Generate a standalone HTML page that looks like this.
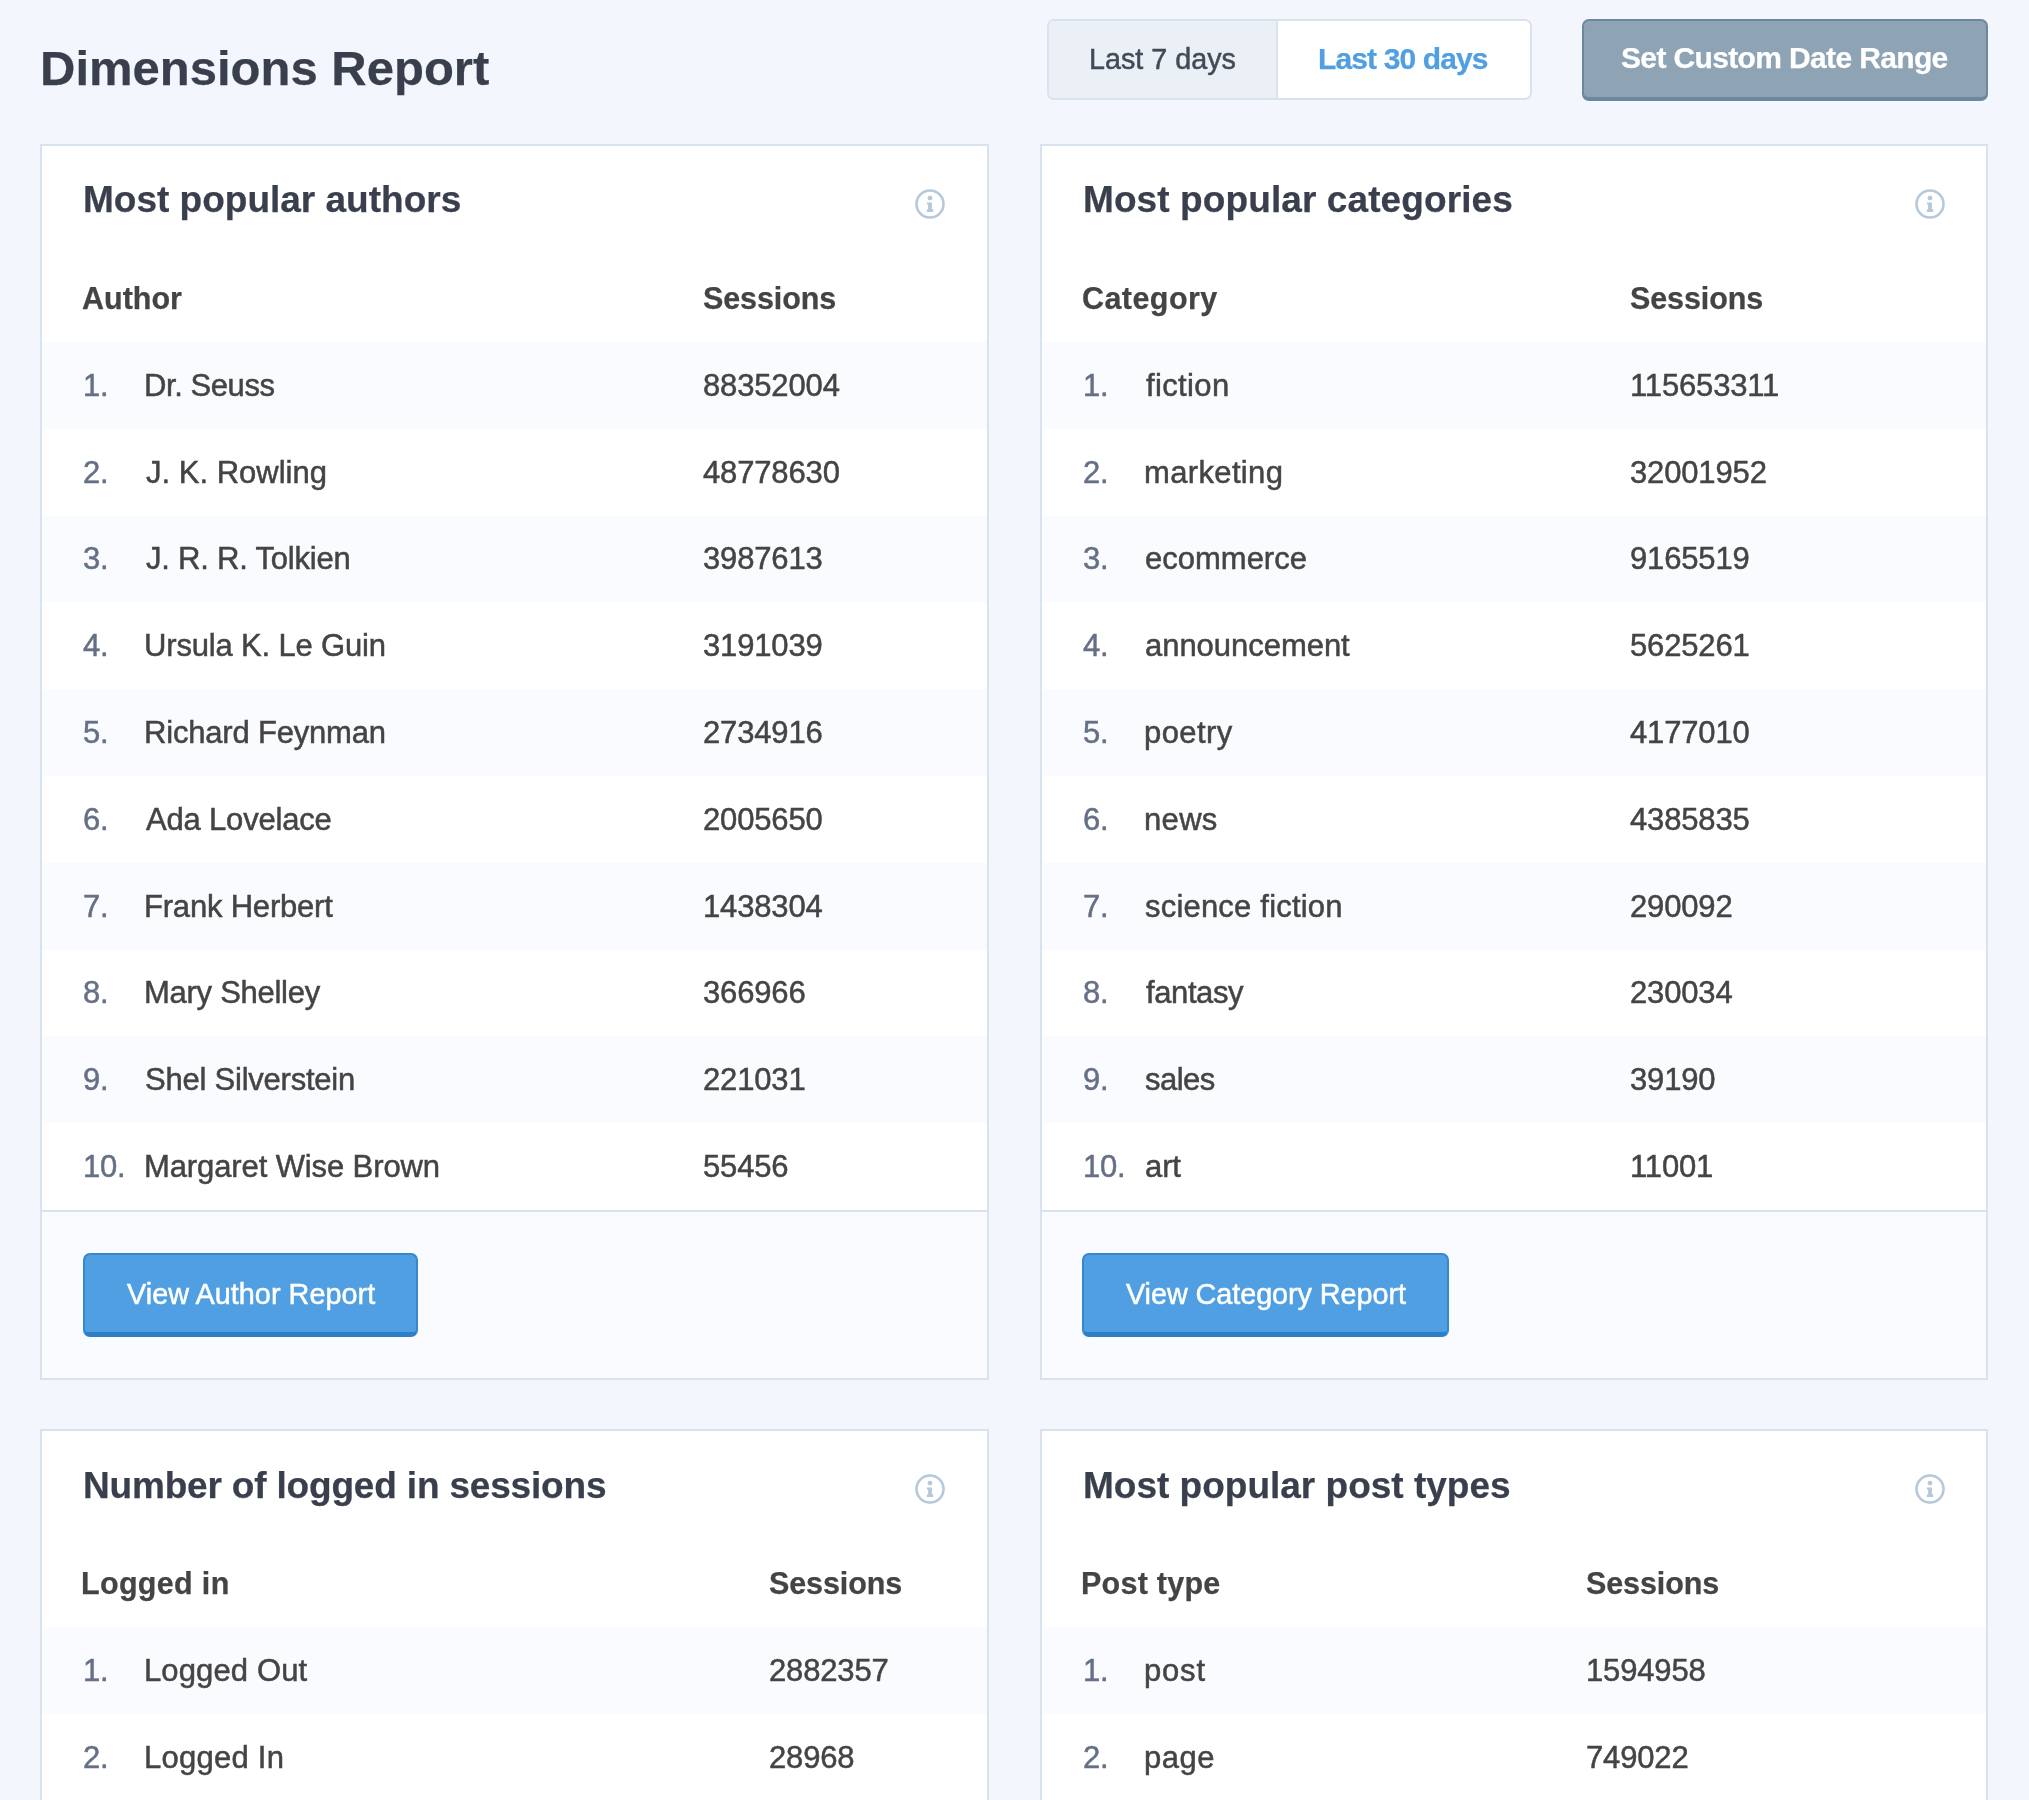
<!DOCTYPE html>
<html><head><meta charset="utf-8">
<style>
*{box-sizing:border-box;margin:0;padding:0}
html,body{width:2029px;height:1800px;overflow:hidden;background:#f3f6fd;font-family:"Liberation Sans",sans-serif;color:#444444;position:relative}
.t{position:absolute;white-space:nowrap;-webkit-text-stroke:0.5px currentColor;will-change:transform}
.t.bd{-webkit-text-stroke:0.25px currentColor}
.b{position:absolute}
</style></head><body>
<div class="t bd" style="left:40.0px;top:37.62px;font-size:49px;line-height:61px;font-weight:bold;color:#393f4c;">Dimensions Report</div>
<div class="b" style="left:1047px;top:19px;width:485px;height:81px;border:2px solid #d8e3ee;border-radius:7px;background:#fff;overflow:hidden"><div class="b" style="left:0;top:0;width:229px;height:77px;background:#ebeff6;border-right:2px solid #d8e3ee"></div></div>
<div class="t" style="left:1088.9px;top:41.46px;font-size:28.7px;line-height:36px;color:#434a57;letter-spacing:0.02px;">Last 7 days</div>
<div class="t bd" style="left:1318.3px;top:40.10px;font-size:30px;line-height:38px;font-weight:bold;color:#509fe2;letter-spacing:-0.873px;">Last 30 days</div>
<div class="b" style="left:1582px;top:19px;width:406px;height:81.5px;background:#8ea3b4;border:2px solid #6b889c;border-bottom:4px solid #6b889c;border-radius:7px"></div>
<div class="t bd" style="left:1621.4px;top:38.90px;font-size:30px;line-height:38px;font-weight:bold;color:#fff;letter-spacing:-0.64px;">Set Custom Date Range</div>
<div class="b" style="left:40px;top:144px;width:949px;height:1236px;border:2px solid #d8e3ee;background:#fff"></div>
<div class="t bd" style="left:83.3px;top:177.38px;font-size:37px;line-height:46px;font-weight:bold;color:#393f4c;">Most popular authors</div>
<svg class="b" style="left:914px;top:188px" width="32" height="32" viewBox="0 0 32 32"><circle cx="16" cy="16" r="13.5" fill="none" stroke="#b6c9da" stroke-width="2.6"/><circle cx="16" cy="10.1" r="2.45" fill="#b6c9da"/><path d="M12.9 14.4H17.9V21.2H19.2V23.9H12.9V21.2H14.1V16.6H12.9Z" fill="#b6c9da"/></svg>
<div class="t bd" style="left:82.0px;top:279.43px;font-size:30.5px;line-height:38px;font-weight:bold;color:#444444;">Author</div>
<div class="t bd" style="left:703.0px;top:279.43px;font-size:30.5px;line-height:38px;font-weight:bold;color:#444444;letter-spacing:-0.114px;">Sessions</div>
<div class="b" style="left:42px;top:342.0px;width:945px;height:86.8px;background:#f9fbff"></div>
<div class="t" style="left:83px;top:369.76px;font-size:31px;line-height:31px;letter-spacing:-0.3px;color:#657086">1.</div>
<div class="t" style="left:144.0px;top:365.76px;font-size:31px;line-height:39px;color:#444444;letter-spacing:-0.425px;">Dr. Seuss</div>
<div class="t" style="left:703.0px;top:365.76px;font-size:31px;line-height:39px;color:#444444;letter-spacing:-0.15px;">88352004</div>
<div class="t" style="left:83px;top:456.56px;font-size:31px;line-height:31px;letter-spacing:-0.3px;color:#657086">2.</div>
<div class="t" style="left:146.0px;top:452.56px;font-size:31px;line-height:39px;color:#444444;">J. K. Rowling</div>
<div class="t" style="left:703.0px;top:452.56px;font-size:31px;line-height:39px;color:#444444;letter-spacing:-0.15px;">48778630</div>
<div class="b" style="left:42px;top:515.6px;width:945px;height:86.8px;background:#f9fbff"></div>
<div class="t" style="left:83px;top:543.36px;font-size:31px;line-height:31px;letter-spacing:-0.3px;color:#657086">3.</div>
<div class="t" style="left:146.0px;top:539.36px;font-size:31px;line-height:39px;color:#444444;letter-spacing:-0.213px;">J. R. R. Tolkien</div>
<div class="t" style="left:703.0px;top:539.36px;font-size:31px;line-height:39px;color:#444444;letter-spacing:-0.15px;">3987613</div>
<div class="t" style="left:83px;top:630.16px;font-size:31px;line-height:31px;letter-spacing:-0.3px;color:#657086">4.</div>
<div class="t" style="left:144.0px;top:626.16px;font-size:31px;line-height:39px;color:#444444;letter-spacing:-0.163px;">Ursula K. Le Guin</div>
<div class="t" style="left:703.0px;top:626.16px;font-size:31px;line-height:39px;color:#444444;letter-spacing:-0.15px;">3191039</div>
<div class="b" style="left:42px;top:689.2px;width:945px;height:86.8px;background:#f9fbff"></div>
<div class="t" style="left:83px;top:716.96px;font-size:31px;line-height:31px;letter-spacing:-0.3px;color:#657086">5.</div>
<div class="t" style="left:144.0px;top:712.96px;font-size:31px;line-height:39px;color:#444444;letter-spacing:-0.186px;">Richard Feynman</div>
<div class="t" style="left:703.0px;top:712.96px;font-size:31px;line-height:39px;color:#444444;letter-spacing:-0.15px;">2734916</div>
<div class="t" style="left:83px;top:803.76px;font-size:31px;line-height:31px;letter-spacing:-0.3px;color:#657086">6.</div>
<div class="t" style="left:146.0px;top:799.76px;font-size:31px;line-height:39px;color:#444444;letter-spacing:-0.182px;">Ada Lovelace</div>
<div class="t" style="left:703.0px;top:799.76px;font-size:31px;line-height:39px;color:#444444;letter-spacing:-0.15px;">2005650</div>
<div class="b" style="left:42px;top:862.8px;width:945px;height:86.8px;background:#f9fbff"></div>
<div class="t" style="left:83px;top:890.56px;font-size:31px;line-height:31px;letter-spacing:-0.3px;color:#657086">7.</div>
<div class="t" style="left:144.0px;top:886.56px;font-size:31px;line-height:39px;color:#444444;letter-spacing:-0.2px;">Frank Herbert</div>
<div class="t" style="left:703.0px;top:886.56px;font-size:31px;line-height:39px;color:#444444;letter-spacing:-0.15px;">1438304</div>
<div class="t" style="left:83px;top:977.36px;font-size:31px;line-height:31px;letter-spacing:-0.3px;color:#657086">8.</div>
<div class="t" style="left:144.0px;top:973.36px;font-size:31px;line-height:39px;color:#444444;letter-spacing:-0.273px;">Mary Shelley</div>
<div class="t" style="left:703.0px;top:973.36px;font-size:31px;line-height:39px;color:#444444;letter-spacing:-0.15px;">366966</div>
<div class="b" style="left:42px;top:1036.4px;width:945px;height:86.8px;background:#f9fbff"></div>
<div class="t" style="left:83px;top:1064.16px;font-size:31px;line-height:31px;letter-spacing:-0.3px;color:#657086">9.</div>
<div class="t" style="left:145.0px;top:1060.16px;font-size:31px;line-height:39px;color:#444444;letter-spacing:-0.227px;">Shel Silverstein</div>
<div class="t" style="left:703.0px;top:1060.16px;font-size:31px;line-height:39px;color:#444444;letter-spacing:-0.15px;">221031</div>
<div class="t" style="left:83px;top:1150.96px;font-size:31px;line-height:31px;letter-spacing:-0.3px;color:#657086">10.</div>
<div class="t" style="left:144.0px;top:1146.96px;font-size:31px;line-height:39px;color:#444444;letter-spacing:-0.111px;">Margaret Wise Brown</div>
<div class="t" style="left:703.0px;top:1146.96px;font-size:31px;line-height:39px;color:#444444;letter-spacing:-0.15px;">55456</div>
<div class="b" style="left:42px;top:1210.0px;width:945px;height:168.0px;background:#f9fbff;border-top:2px solid #d8e3ee"></div>
<div class="b" style="left:83px;top:1253.3px;width:335px;height:83.5px;background:#509fe2;border:2px solid #3587cf;border-bottom:5px solid #2f7fc4;border-radius:7px"></div>
<div class="t" style="left:126.5px;top:1276.02px;font-size:28.8px;line-height:36px;color:#fff;letter-spacing:0.035px;">View Author Report</div>
<div class="b" style="left:1040px;top:144px;width:948px;height:1236px;border:2px solid #d8e3ee;background:#fff"></div>
<div class="t bd" style="left:1083.3px;top:177.38px;font-size:37px;line-height:46px;font-weight:bold;color:#393f4c;letter-spacing:0.1px;">Most popular categories</div>
<svg class="b" style="left:1914px;top:188px" width="32" height="32" viewBox="0 0 32 32"><circle cx="16" cy="16" r="13.5" fill="none" stroke="#b6c9da" stroke-width="2.6"/><circle cx="16" cy="10.1" r="2.45" fill="#b6c9da"/><path d="M12.9 14.4H17.9V21.2H19.2V23.9H12.9V21.2H14.1V16.6H12.9Z" fill="#b6c9da"/></svg>
<div class="t bd" style="left:1082.0px;top:279.43px;font-size:30.5px;line-height:38px;font-weight:bold;color:#444444;letter-spacing:0.429px;">Category</div>
<div class="t bd" style="left:1630.0px;top:279.43px;font-size:30.5px;line-height:38px;font-weight:bold;color:#444444;letter-spacing:-0.114px;">Sessions</div>
<div class="b" style="left:1042px;top:342.0px;width:944px;height:86.8px;background:#f9fbff"></div>
<div class="t" style="left:1083px;top:369.76px;font-size:31px;line-height:31px;letter-spacing:-0.3px;color:#657086">1.</div>
<div class="t" style="left:1146.0px;top:365.76px;font-size:31px;line-height:39px;color:#444444;letter-spacing:0.367px;">fiction</div>
<div class="t" style="left:1630.0px;top:365.76px;font-size:31px;line-height:39px;color:#444444;letter-spacing:-0.15px;">115653311</div>
<div class="t" style="left:1083px;top:456.56px;font-size:31px;line-height:31px;letter-spacing:-0.3px;color:#657086">2.</div>
<div class="t" style="left:1144.0px;top:452.56px;font-size:31px;line-height:39px;color:#444444;letter-spacing:0.35px;">marketing</div>
<div class="t" style="left:1630.0px;top:452.56px;font-size:31px;line-height:39px;color:#444444;letter-spacing:-0.15px;">32001952</div>
<div class="b" style="left:1042px;top:515.6px;width:944px;height:86.8px;background:#f9fbff"></div>
<div class="t" style="left:1083px;top:543.36px;font-size:31px;line-height:31px;letter-spacing:-0.3px;color:#657086">3.</div>
<div class="t" style="left:1145.0px;top:539.36px;font-size:31px;line-height:39px;color:#444444;">ecommerce</div>
<div class="t" style="left:1630.0px;top:539.36px;font-size:31px;line-height:39px;color:#444444;letter-spacing:-0.15px;">9165519</div>
<div class="t" style="left:1083px;top:630.16px;font-size:31px;line-height:31px;letter-spacing:-0.3px;color:#657086">4.</div>
<div class="t" style="left:1145.0px;top:626.16px;font-size:31px;line-height:39px;color:#444444;letter-spacing:-0.036px;">announcement</div>
<div class="t" style="left:1630.0px;top:626.16px;font-size:31px;line-height:39px;color:#444444;letter-spacing:-0.15px;">5625261</div>
<div class="b" style="left:1042px;top:689.2px;width:944px;height:86.8px;background:#f9fbff"></div>
<div class="t" style="left:1083px;top:716.96px;font-size:31px;line-height:31px;letter-spacing:-0.3px;color:#657086">5.</div>
<div class="t" style="left:1144.0px;top:712.96px;font-size:31px;line-height:39px;color:#444444;letter-spacing:0.4px;">poetry</div>
<div class="t" style="left:1630.0px;top:712.96px;font-size:31px;line-height:39px;color:#444444;letter-spacing:-0.15px;">4177010</div>
<div class="t" style="left:1083px;top:803.76px;font-size:31px;line-height:31px;letter-spacing:-0.3px;color:#657086">6.</div>
<div class="t" style="left:1144.0px;top:799.76px;font-size:31px;line-height:39px;color:#444444;letter-spacing:0.333px;">news</div>
<div class="t" style="left:1630.0px;top:799.76px;font-size:31px;line-height:39px;color:#444444;letter-spacing:-0.15px;">4385835</div>
<div class="b" style="left:1042px;top:862.8px;width:944px;height:86.8px;background:#f9fbff"></div>
<div class="t" style="left:1083px;top:890.56px;font-size:31px;line-height:31px;letter-spacing:-0.3px;color:#657086">7.</div>
<div class="t" style="left:1145.0px;top:886.56px;font-size:31px;line-height:39px;color:#444444;letter-spacing:0.2px;">science fiction</div>
<div class="t" style="left:1630.0px;top:886.56px;font-size:31px;line-height:39px;color:#444444;letter-spacing:-0.15px;">290092</div>
<div class="t" style="left:1083px;top:977.36px;font-size:31px;line-height:31px;letter-spacing:-0.3px;color:#657086">8.</div>
<div class="t" style="left:1146.0px;top:973.36px;font-size:31px;line-height:39px;color:#444444;letter-spacing:-0.4px;">fantasy</div>
<div class="t" style="left:1630.0px;top:973.36px;font-size:31px;line-height:39px;color:#444444;letter-spacing:-0.15px;">230034</div>
<div class="b" style="left:1042px;top:1036.4px;width:944px;height:86.8px;background:#f9fbff"></div>
<div class="t" style="left:1083px;top:1064.16px;font-size:31px;line-height:31px;letter-spacing:-0.3px;color:#657086">9.</div>
<div class="t" style="left:1145.0px;top:1060.16px;font-size:31px;line-height:39px;color:#444444;letter-spacing:-0.55px;">sales</div>
<div class="t" style="left:1630.0px;top:1060.16px;font-size:31px;line-height:39px;color:#444444;letter-spacing:-0.15px;">39190</div>
<div class="t" style="left:1083px;top:1150.96px;font-size:31px;line-height:31px;letter-spacing:-0.3px;color:#657086">10.</div>
<div class="t" style="left:1145.0px;top:1146.96px;font-size:31px;line-height:39px;color:#444444;letter-spacing:-0.1px;">art</div>
<div class="t" style="left:1630.0px;top:1146.96px;font-size:31px;line-height:39px;color:#444444;letter-spacing:-0.15px;">11001</div>
<div class="b" style="left:1042px;top:1210.0px;width:944px;height:168.0px;background:#f9fbff;border-top:2px solid #d8e3ee"></div>
<div class="b" style="left:1082px;top:1253.3px;width:367px;height:83.5px;background:#509fe2;border:2px solid #3587cf;border-bottom:5px solid #2f7fc4;border-radius:7px"></div>
<div class="t" style="left:1125.8px;top:1276.02px;font-size:28.8px;line-height:36px;color:#fff;letter-spacing:-0.063px;">View Category Report</div>
<div class="b" style="left:40px;top:1429px;width:949px;height:381px;border:2px solid #d8e3ee;background:#fff"></div>
<div class="t bd" style="left:83.3px;top:1463.18px;font-size:37px;line-height:46px;font-weight:bold;color:#393f4c;letter-spacing:-0.178px;">Number of logged in sessions</div>
<svg class="b" style="left:914px;top:1473px" width="32" height="32" viewBox="0 0 32 32"><circle cx="16" cy="16" r="13.5" fill="none" stroke="#b6c9da" stroke-width="2.6"/><circle cx="16" cy="10.1" r="2.45" fill="#b6c9da"/><path d="M12.9 14.4H17.9V21.2H19.2V23.9H12.9V21.2H14.1V16.6H12.9Z" fill="#b6c9da"/></svg>
<div class="t bd" style="left:81.0px;top:1564.43px;font-size:30.5px;line-height:38px;font-weight:bold;color:#444444;letter-spacing:0.325px;">Logged in</div>
<div class="t bd" style="left:769.0px;top:1564.43px;font-size:30.5px;line-height:38px;font-weight:bold;color:#444444;letter-spacing:-0.114px;">Sessions</div>
<div class="b" style="left:42px;top:1627.0px;width:945px;height:86.8px;background:#f9fbff"></div>
<div class="t" style="left:83px;top:1654.76px;font-size:31px;line-height:31px;letter-spacing:-0.3px;color:#657086">1.</div>
<div class="t" style="left:144.0px;top:1650.76px;font-size:31px;line-height:39px;color:#444444;letter-spacing:0.133px;">Logged Out</div>
<div class="t" style="left:769.0px;top:1650.76px;font-size:31px;line-height:39px;color:#444444;letter-spacing:-0.15px;">2882357</div>
<div class="t" style="left:83px;top:1741.56px;font-size:31px;line-height:31px;letter-spacing:-0.3px;color:#657086">2.</div>
<div class="t" style="left:144.0px;top:1737.56px;font-size:31px;line-height:39px;color:#444444;letter-spacing:0.25px;">Logged In</div>
<div class="t" style="left:769.0px;top:1737.56px;font-size:31px;line-height:39px;color:#444444;letter-spacing:-0.15px;">28968</div>
<div class="b" style="left:1040px;top:1429px;width:948px;height:381px;border:2px solid #d8e3ee;background:#fff"></div>
<div class="t bd" style="left:1083.3px;top:1463.18px;font-size:37px;line-height:46px;font-weight:bold;color:#393f4c;">Most popular post types</div>
<svg class="b" style="left:1914px;top:1473px" width="32" height="32" viewBox="0 0 32 32"><circle cx="16" cy="16" r="13.5" fill="none" stroke="#b6c9da" stroke-width="2.6"/><circle cx="16" cy="10.1" r="2.45" fill="#b6c9da"/><path d="M12.9 14.4H17.9V21.2H19.2V23.9H12.9V21.2H14.1V16.6H12.9Z" fill="#b6c9da"/></svg>
<div class="t bd" style="left:1081.0px;top:1564.43px;font-size:30.5px;line-height:38px;font-weight:bold;color:#444444;letter-spacing:0.25px;">Post type</div>
<div class="t bd" style="left:1586.0px;top:1564.43px;font-size:30.5px;line-height:38px;font-weight:bold;color:#444444;letter-spacing:-0.114px;">Sessions</div>
<div class="b" style="left:1042px;top:1627.0px;width:944px;height:86.8px;background:#f9fbff"></div>
<div class="t" style="left:1083px;top:1654.76px;font-size:31px;line-height:31px;letter-spacing:-0.3px;color:#657086">1.</div>
<div class="t" style="left:1144.0px;top:1650.76px;font-size:31px;line-height:39px;color:#444444;letter-spacing:0.8px;">post</div>
<div class="t" style="left:1586.0px;top:1650.76px;font-size:31px;line-height:39px;color:#444444;letter-spacing:-0.15px;">1594958</div>
<div class="t" style="left:1083px;top:1741.56px;font-size:31px;line-height:31px;letter-spacing:-0.3px;color:#657086">2.</div>
<div class="t" style="left:1144.0px;top:1737.56px;font-size:31px;line-height:39px;color:#444444;letter-spacing:0.533px;">page</div>
<div class="t" style="left:1586.0px;top:1737.56px;font-size:31px;line-height:39px;color:#444444;letter-spacing:-0.15px;">749022</div>
</body></html>
